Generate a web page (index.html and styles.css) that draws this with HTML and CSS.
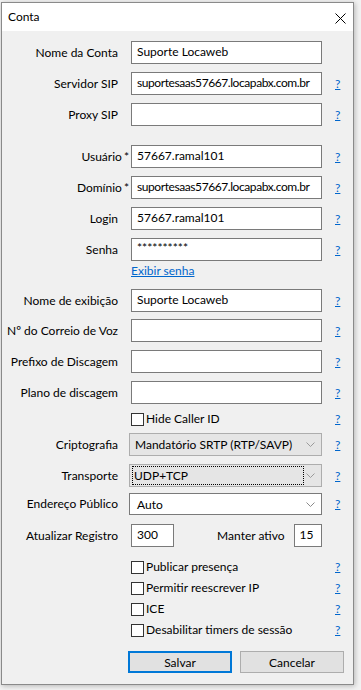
FILE: index.html
```html
<!DOCTYPE html>
<html lang="pt-BR">
<head>
<meta charset="utf-8">
<title>Conta</title>
<link rel="stylesheet" href="styles.css">
</head>
<body>
<div class="window">
  <div class="titlebar">
    <span class="title">Conta</span>
    <svg class="close" width="11" height="11" viewBox="0 0 11 11"><path d="M0.5 0.5 L10.5 10.5 M10.5 0.5 L0.5 10.5" stroke="#000" stroke-width="1" fill="none"/></svg>
  </div>
  <div class="content">
    <div class="row first">
      <span class="label">Nome da Conta</span>
      <div class="field"><div class="input">Suporte Locaweb</div></div>
      <span></span>
    </div>
    <div class="row">
      <span class="label">Servidor SIP</span>
      <div class="field"><div class="input dense">suportesaas57667.locapabx.com.br</div></div>
      <a class="help">?</a>
    </div>
    <div class="row">
      <span class="label">Proxy SIP</span>
      <div class="field"><div class="input"></div></div>
      <a class="help">?</a>
    </div>
    <div class="row group">
      <span class="label req">Usuário<span class="star">*</span></span>
      <div class="field"><div class="input">57667.ramal101</div></div>
      <a class="help">?</a>
    </div>
    <div class="row">
      <span class="label req">Domínio<span class="star">*</span></span>
      <div class="field"><div class="input dense">suportesaas57667.locapabx.com.br</div></div>
      <a class="help">?</a>
    </div>
    <div class="row">
      <span class="label">Login</span>
      <div class="field"><div class="input">57667.ramal101</div></div>
      <a class="help">?</a>
    </div>
    <div class="row">
      <span class="label">Senha</span>
      <div class="field"><div class="input pw">**********</div></div>
      <a class="help">?</a>
    </div>
    <div class="row link-row">
      <span></span>
      <div class="field"><a class="link">Exibir senha</a></div>
      <span></span>
    </div>
    <div class="row after-link">
      <span class="label">Nome de exibição</span>
      <div class="field"><div class="input">Suporte Locaweb</div></div>
      <a class="help">?</a>
    </div>
    <div class="row tight">
      <span class="label">Nº do Correio de Voz</span>
      <div class="field"><div class="input"></div></div>
      <a class="help">?</a>
    </div>
    <div class="row">
      <span class="label">Prefixo de Discagem</span>
      <div class="field"><div class="input"></div></div>
      <a class="help">?</a>
    </div>
    <div class="row">
      <span class="label">Plano de discagem</span>
      <div class="field"><div class="input"></div></div>
      <a class="help">?</a>
    </div>
    <div class="row check-row cb-first">
      <span></span>
      <div class="field"><span class="checkbox"></span><span class="cb-label">Hide Caller ID</span></div>
      <a class="help">?</a>
    </div>
    <div class="row sel-first">
      <span class="label">Criptografia</span>
      <div class="field"><div class="select disabled"><span>Mandatório SRTP (RTP/SAVP)</span><svg width="9" height="5" viewBox="0 0 9 5"><path d="M0.5 0.5 L4.5 4.5 L8.5 0.5" stroke="#9a9a9a" fill="none"/></svg></div></div>
      <a class="help">?</a>
    </div>
    <div class="row">
      <span class="label">Transporte</span>
      <div class="field"><div class="select disabled focused"><span class="focus-ring">UDP+TCP</span><svg width="9" height="5" viewBox="0 0 9 5"><path d="M0.5 0.5 L4.5 4.5 L8.5 0.5" stroke="#9a9a9a" fill="none"/></svg></div></div>
      <a class="help">?</a>
    </div>
    <div class="row sel-last">
      <span class="label">Endereço Público</span>
      <div class="field"><div class="select open"><span>Auto</span><svg width="9" height="5" viewBox="0 0 9 5"><path d="M0.5 0.5 L4.5 4.5 L8.5 0.5" stroke="#8a8a8a" fill="none"/></svg></div></div>
      <a class="help">?</a>
    </div>
    <div class="row reg-row">
      <span class="label">Atualizar Registro</span>
      <div class="field">
        <div class="input small">300</div>
        <span class="inline-label">Manter ativo</span>
        <div class="input tiny">15</div>
      </div>
      <span></span>
    </div>
    <div class="row check-row cb-group">
      <span></span>
      <div class="field"><span class="checkbox"></span><span class="cb-label">Publicar presença</span></div>
      <a class="help">?</a>
    </div>
    <div class="row check-row">
      <span></span>
      <div class="field"><span class="checkbox"></span><span class="cb-label">Permitir reescrever IP</span></div>
      <a class="help">?</a>
    </div>
    <div class="row check-row">
      <span></span>
      <div class="field"><span class="checkbox"></span><span class="cb-label">ICE</span></div>
      <a class="help">?</a>
    </div>
    <div class="row check-row">
      <span></span>
      <div class="field"><span class="checkbox"></span><span class="cb-label">Desabilitar timers de sessão</span></div>
      <a class="help">?</a>
    </div>
    <div class="buttons">
      <button class="btn default">Salvar</button>
      <button class="btn">Cancelar</button>
    </div>
  </div>
</div>
</body>
</html>
```
FILE: styles.css
```css
* { box-sizing: border-box; }
html, body { margin: 0; padding: 0; }
body {
  background: #f2f2f2;
  font-family: "Lato", "Noto Sans", sans-serif;
  font-size: 12px;
  color: #000;
  width: 361px;
  height: 690px;
  overflow: hidden;
}
.window {
  margin: 2px 0 0 1px;
  width: 353px;
  height: 683px;
  border: 1px solid #8a8a8a;
  background: #f0f0f0;
  box-shadow: 1px 1px 5px rgba(0,0,0,0.25);
  display: flex;
  flex-direction: column;
}
.titlebar {
  height: 28px;
  background: #fff;
  display: flex;
  align-items: center;
  justify-content: space-between;
  padding: 0 7px 0 6px;
}
.title { font-size: 12px; line-height: 16px; }
.close { margin-right: 0; margin-top: 2px; }
.content { flex: 1; padding-top: 10px; }
.row {
  display: grid;
  grid-template-columns: 116px 191px 1fr;
  column-gap: 13px;
  align-items: center;
  height: 23px;
  margin-top: 8px;
}
.row.first { margin-top: 0; }
.row.group { margin-top: 19px; }
.row.link-row { height: 15px; margin-top: 2px; }
.row.after-link { margin-top: 11px; }
.row.tight { margin-top: 7px; }
.row.cb-first { margin-top: 7px; }
.row.sel-first { margin-top: 9px; }
.row.sel-last { margin-top: 6px; height: 22px; }
.row.reg-row { margin-top: 9px; }
.row.cb-group { margin-top: 12px; }
.row.check-row { height: 13px; }
.row.check-row:not(.cb-first):not(.cb-group) { margin-top: 8px; }
.label {
  text-align: right;
  white-space: nowrap;
  line-height: 16px;
}
.label.req { margin-right: -11px; }
.star { margin-left: 2px; }
.field { display: flex; align-items: center; height: 100%; }
.input {
  width: 191px;
  height: 100%;
  background: #fff;
  border: 1px solid #7a7a7a;
  padding: 0 5px;
  line-height: 19px;
  white-space: nowrap;
  overflow: hidden;
}
.input.dense { letter-spacing: -0.42px; }
.input.pw { line-height: 17px; font-size: 12px; letter-spacing: 0; }
.input.small { width: 46px; }
.input.tiny { width: 30px; }
.inline-label { margin-left: 43px; margin-right: 9px; white-space: nowrap; }
.help {
  color: #0066cc;
  text-decoration: underline;
  line-height: 16px;
}
.link {
  color: #0066cc;
  text-decoration: underline;
  line-height: 15px;
}
.checkbox {
  width: 13px;
  height: 13px;
  background: #fff;
  border: 1px solid #333;
  flex: none;
}
.cb-label { margin-left: 2px; white-space: nowrap; line-height: 16px; }
.select {
  width: 193px;
  margin-left: -2px;
  height: 100%;
  border: 1px solid #adadad;
  background: #e5e5e5;
  display: flex;
  align-items: center;
  justify-content: space-between;
  padding: 0 6px 0 5px;
  white-space: nowrap;
}
.select.open { background: #fff; border-color: #7a7a7a; padding-left: 7px; }
.focus-ring {
  outline: 1px dotted #000;
  outline-offset: 0;
  margin-left: -2px;
  width: 170px;
  height: 17px;
  line-height: 17px;
  padding-left: 1px;
}
.buttons {
  display: flex;
  gap: 8px;
  margin-top: 16px;
  padding-left: 126px;
}
.btn {
  width: 104px;
  height: 22px;
  background: #e1e1e1;
  border: 1px solid #adadad;
  font-family: inherit;
  font-size: 12px;
  color: #000;
  padding: 0;
}
.btn.default { border: 2px solid #0078d7; }
```
